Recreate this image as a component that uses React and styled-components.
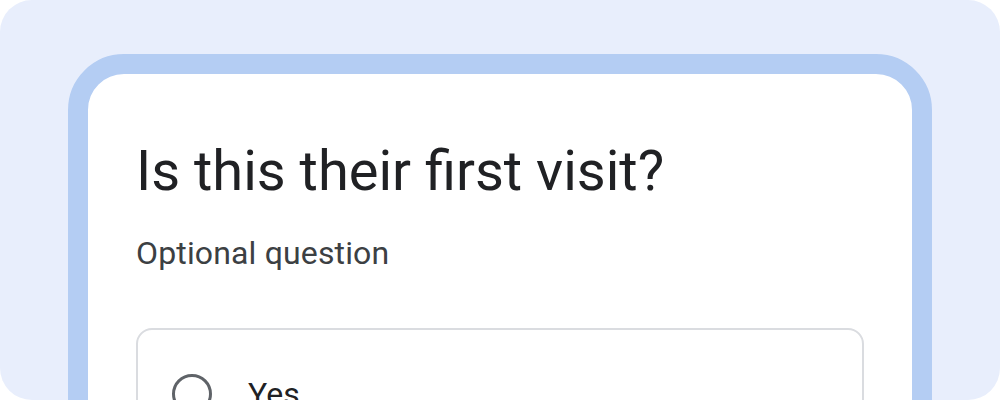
import React from "react";
import styled, { createGlobalStyle } from "styled-components";

const Global = createGlobalStyle`
  html, body { margin: 0; padding: 0; background: #ffffff; }
  body { font-family: Roboto, "Noto Sans", Arial, sans-serif; }
  * { box-sizing: border-box; }
`;

const Frame = styled.div`
  width: 1000px;
  height: 400px;
  background: #e8eefc;
  border-radius: 32px;
  padding: 54px 68px 0;
  overflow: hidden;
`;

const Card = styled.div`
  background: #ffffff;
  border: 20px solid #b4cdf3;
  border-radius: 56px;
  padding: 65px 48px 0;
  height: 420px;
`;

const Title = styled.h1`
  margin: 0;
  font-size: 56px;
  line-height: 64px;
  font-weight: 400;
  color: #202124;
`;

const Subtitle = styled.p`
  margin: 30px 0 0;
  font-size: 32px;
  line-height: 40px;
  font-weight: 400;
  letter-spacing: 0.15px;
  color: #3c4043;
`;

const Options = styled.div`
  margin-top: 55px;
  border: 2px solid #dadce0;
  border-radius: 16px;
  padding: 44px 34px;
  display: flex;
  flex-direction: column;
  gap: 24px;
`;

const Option = styled.label`
  display: flex;
  align-items: center;
  gap: 36px;
`;

const Radio = styled.span`
  width: 40px;
  height: 40px;
  border-radius: 50%;
  border: 3.5px solid #5f6368;
  flex: none;
`;

const OptionText = styled.span`
  font-size: 32px;
  line-height: 40px;
  color: #202124;
`;

export default function App() {
  return (
    <>
      <Global />
      <Frame>
        <Card>
          <Title>Is this their first visit?</Title>
          <Subtitle>Optional question</Subtitle>
          <Options>
            <Option>
              <Radio />
              <OptionText>Yes</OptionText>
            </Option>
            <Option>
              <Radio />
              <OptionText>No</OptionText>
            </Option>
          </Options>
        </Card>
      </Frame>
    </>
  );
}
